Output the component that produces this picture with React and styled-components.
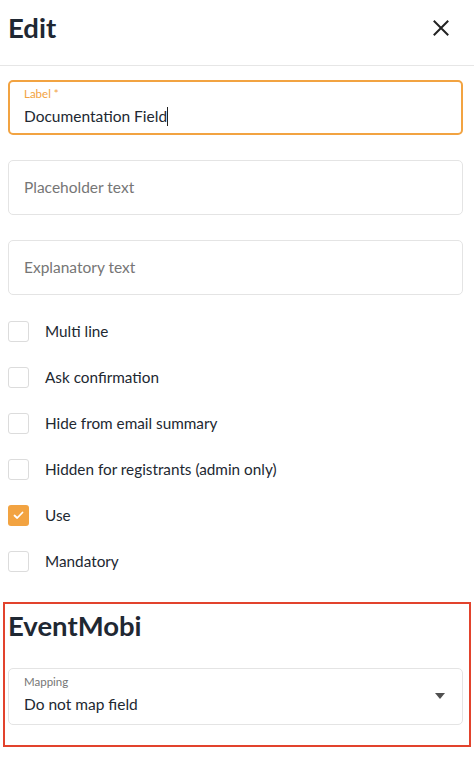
import React from 'react';
import styled, { createGlobalStyle } from 'styled-components';

const GlobalStyle = createGlobalStyle`
  body {
    margin: 0;
    background: #ffffff;
    font-family: Lato, "Open Sans", sans-serif;
    color: #222831;
  }
`;

const Page = styled.div`
  width: 474px;
  min-height: 779px;
  background: #fff;
`;

const Header = styled.header`
  display: flex;
  justify-content: space-between;
  align-items: flex-start;
  height: 66px;
  padding: 12px 24px 0 8px;
  box-sizing: border-box;
  border-bottom: 1px solid #e6e6e6;
`;

const Title = styled.h1`
  margin: 0;
  font-size: 27.5px;
  line-height: 32px;
  font-weight: 700;
  color: #1f2833;
`;

const CloseButton = styled.button`
  display: flex;
  align-items: center;
  justify-content: center;
  width: 18px;
  height: 18px;
  margin-top: 7px;
  padding: 0;
  border: none;
  background: none;
  color: #222;
`;

const Body = styled.div`
  display: flex;
  flex-direction: column;
  padding: 14px 11px 0 8px;
`;

const Fields = styled.div`
  display: flex;
  flex-direction: column;
  gap: 25px;
`;

const Field = styled.div`
  height: ${p => p.$height || 55}px;
  box-sizing: border-box;
  border: ${p => (p.$focused ? '2px solid #f2a341' : '1px solid #e4e4e4')};
  border-radius: 5px;
  padding: ${p => (p.$focused ? '5px 14px 6px' : '6px 15px 7px')};
  display: flex;
  flex-direction: column;
  justify-content: ${p => (p.$empty ? 'center' : 'flex-start')};
`;

const FieldLabel = styled.span`
  font-size: 11.5px;
  line-height: 13px;
  color: ${p => (p.$focused ? '#f2a341' : '#767676')};
`;

const FieldValue = styled.span`
  font-size: 15.5px;
  line-height: 24px;
  margin-top: 4px;
  color: #222831;
`;

const Placeholder = styled.span`
  font-size: 15.5px;
  line-height: 24px;
  color: #767676;
`;

const Caret = styled.span`
  display: inline-block;
  width: 1px;
  height: 19px;
  background: #222;
  vertical-align: -4px;
`;

const Checks = styled.div`
  display: flex;
  flex-direction: column;
  gap: 24px;
  margin-top: 25px;
`;

const CheckRow = styled.label`
  display: flex;
  align-items: center;
  gap: 16px;
  height: 22px;
  font-size: 15.3px;
  color: #222831;
`;

const Box = styled.span`
  width: 21px;
  height: 21px;
  box-sizing: border-box;
  border-radius: 3px;
  border: ${p => (p.$checked ? 'none' : '1px solid #dcdcdc')};
  background: ${p => (p.$checked ? '#f2a341' : '#fff')};
  display: flex;
  align-items: center;
  justify-content: center;
`;

const Integration = styled.section`
  margin: 30px -8px 0 -5px;
  border: 2px solid #e2432d;
  padding: 6px 6px 20px 3px;
  display: flex;
  flex-direction: column;
`;

const SectionTitle = styled.h2`
  margin: 0 0 26px;
  font-size: 27.5px;
  line-height: 32px;
  font-weight: 700;
  color: #1f2833;
`;

const SelectField = styled(Field)`
  flex-direction: row;
  align-items: center;
  justify-content: space-between;
`;

const SelectText = styled.div`
  display: flex;
  flex-direction: column;
  align-self: flex-start;
`;

const checks = [
  { label: 'Multi line' },
  { label: 'Ask confirmation' },
  { label: 'Hide from email summary' },
  { label: 'Hidden for registrants (admin only)' },
  { label: 'Use', checked: true },
  { label: 'Mandatory' },
];

const App = () => (
  <Page>
    <GlobalStyle />
    <Header>
      <Title>Edit</Title>
      <CloseButton aria-label="Close">
        <svg width="16" height="16" viewBox="0 0 16 16">
          <path d="M1.5 1.5 L14.5 14.5 M14.5 1.5 L1.5 14.5" stroke="#222" strokeWidth="2" strokeLinecap="square" />
        </svg>
      </CloseButton>
    </Header>
    <Body>
      <Fields>
        <Field $focused>
          <FieldLabel $focused>Label *</FieldLabel>
          <FieldValue>Documentation Field<Caret /></FieldValue>
        </Field>
        <Field $empty>
          <Placeholder>Placeholder text</Placeholder>
        </Field>
        <Field $empty>
          <Placeholder>Explanatory text</Placeholder>
        </Field>
      </Fields>
      <Checks>
        {checks.map(c => (
          <CheckRow key={c.label}>
            <Box $checked={c.checked}>
              {c.checked && (
                <svg width="11" height="9" viewBox="0 0 11 9">
                  <path d="M1.5 4.5 L4.2 7 L9.5 1.5" fill="none" stroke="#fff" strokeWidth="1.8" strokeLinecap="round" strokeLinejoin="round" />
                </svg>
              )}
            </Box>
            {c.label}
          </CheckRow>
        ))}
      </Checks>
      <Integration>
        <SectionTitle>EventMobi</SectionTitle>
        <SelectField $height={57}>
          <SelectText>
            <FieldLabel>Mapping</FieldLabel>
            <FieldValue>Do not map field</FieldValue>
          </SelectText>
          <svg width="10" height="6" viewBox="0 0 10 6" style={{ marginRight: 2 }}>
            <path d="M0 0 L10 0 L5 6 Z" fill="#505050" />
          </svg>
        </SelectField>
      </Integration>
    </Body>
  </Page>
);

export default App;
